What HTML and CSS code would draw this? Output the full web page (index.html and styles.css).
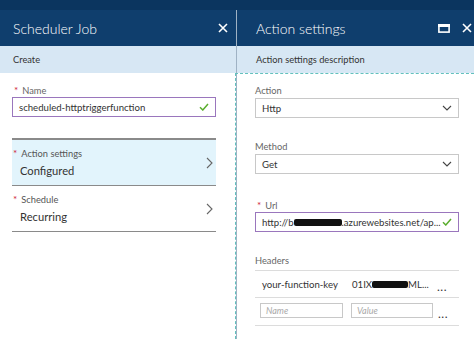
FILE: index.html
```html
<!DOCTYPE html>
<html>
<head>
<meta charset="utf-8">
<link rel="stylesheet" href="styles.css">
</head>
<body>
<div class="topbar"></div>
<div class="blades">
  <section class="blade blade-left">
    <header class="bh">
      <h1 class="bh-title">Scheduler Job</h1>
      <div class="bh-icons">
        <svg class="ico" width="10" height="10" viewBox="0 0 10 10"><path d="M1 1L9 9M9 1L1 9" stroke="#fff" stroke-width="1.6" fill="none"/></svg>
      </div>
    </header>
    <div class="sub">Create</div>
    <div class="content content-left">
      <div class="lbl"><span class="req">*</span>Name</div>
      <div class="input valid">
        <span class="itext">scheduled-httptriggerfunction</span>
        <svg class="check" width="10" height="8" viewBox="0 0 10 8"><path d="M1 4.2L3.8 7L9 1" stroke="#5aae2e" stroke-width="1.5" fill="none"/></svg>
      </div>
      <div class="rows">
        <div class="row active">
          <div class="row-text">
            <div class="rlbl"><span class="req">*</span>Action settings</div>
            <div class="rval">Configured</div>
          </div>
          <svg class="chev" width="7" height="12" viewBox="0 0 7 12"><path d="M1 1L6 6L1 11" stroke="#666" stroke-width="1.1" fill="none"/></svg>
        </div>
        <div class="row">
          <div class="row-text">
            <div class="rlbl"><span class="req">*</span>Schedule</div>
            <div class="rval">Recurring</div>
          </div>
          <svg class="chev" width="7" height="12" viewBox="0 0 7 12"><path d="M1 1L6 6L1 11" stroke="#666" stroke-width="1.1" fill="none"/></svg>
        </div>
      </div>
    </div>
  </section>
  <section class="blade blade-right">
    <header class="bh">
      <h1 class="bh-title">Action settings</h1>
      <div class="bh-icons">
        <svg class="ico" width="12" height="9" viewBox="0 0 12 9"><rect x="0.9" y="0.9" width="10.2" height="7.2" stroke="#fff" stroke-width="1.6" fill="none"/><rect x="0" y="0" width="12" height="3" fill="#fff"/></svg>
        <svg class="ico" width="10" height="10" viewBox="0 0 10 10"><path d="M1 1L9 9M9 1L1 9" stroke="#fff" stroke-width="1.6" fill="none"/></svg>
      </div>
    </header>
    <div class="sub">Action settings description</div>
    <div class="content content-right">
      <div class="field">
        <div class="lbl">Action</div>
        <div class="select"><span class="itext">Http</span><svg class="dd" width="10" height="6" viewBox="0 0 10 6"><path d="M1 1L5 5L9 1" stroke="#444" stroke-width="1.1" fill="none"/></svg></div>
      </div>
      <div class="field">
        <div class="lbl">Method</div>
        <div class="select"><span class="itext">Get</span><svg class="dd" width="10" height="6" viewBox="0 0 10 6"><path d="M1 1L5 5L9 1" stroke="#444" stroke-width="1.1" fill="none"/></svg></div>
      </div>
      <div class="field">
        <div class="lbl"><span class="req">*</span>Url</div>
        <div class="input valid">
          <span class="itext">http://b<span class="redact r1"></span>.azurewebsites.net/ap...</span>
          <svg class="check" width="10" height="8" viewBox="0 0 10 8"><path d="M1 4.2L3.8 7L9 1" stroke="#5aae2e" stroke-width="1.5" fill="none"/></svg>
        </div>
      </div>
      <div class="headers">
        <div class="lbl hlbl">Headers</div>
        <div class="hrow">
          <span class="hname">your-function-key</span>
          <span class="hval">01IX<span class="redact r2"></span>ML...</span>
          <span class="more">...</span>
        </div>
        <div class="hrow hrow-input">
          <span class="hinput">Name</span>
          <span class="hinput">Value</span>
          <span class="more">...</span>
        </div>
      </div>
    </div>
  </section>
</div>
</body>
</html>
```

FILE: styles.css
```css
* { box-sizing: border-box; }
html, body { margin: 0; padding: 0; }
body {
  width: 474px;
  height: 339px;
  overflow: hidden;
  background: #fff;
  font-family: Lato, "Open Sans", sans-serif;
  color: #333;
}
.topbar { height: 10px; background: #0b355f; }
.blades { display: flex; height: 329px; }
.blade { display: flex; flex-direction: column; }
.blade-left { width: 237px; border-right: 1px solid #9fb2c4; }
.blade-right { width: 237px; }
.bh {
  height: 36px;
  background: #0f3e6d;
  display: flex;
  align-items: center;
  justify-content: space-between;
  padding: 0 8px 0 13px;
}
.blade-right .bh { padding-left: 19px; padding-right: 2px; }
.bh-title {
  margin: 0;
  font-size: 14px;
  font-weight: 300;
  color: #fff;
}
.bh-icons { display: flex; align-items: center; gap: 12px; }
.ico { display: block; }
.sub {
  height: 27px;
  background: #d7e7f4;
  font-size: 9.3px;
  color: #333;
  display: flex;
  align-items: center;
  padding-left: 13px;
}
.blade-right .sub { padding-left: 19px; }
.content { flex: 1; }
.content-left { padding: 10px 20px 0 12px; }
.content-right {
  padding: 10px 15px 0 19px;
  border-top: 1px dashed #63c1bd;
  border-left: 1px dashed #63c1bd;
  margin-left: -2px;
}
.lbl {
  font-size: 9.3px;
  color: #666;
  line-height: 14px;
  height: 14px;
}
.req { color: #d0263a; margin-left: 2px; margin-right: 4px; font-size: 10px; }
.input, .select {
  height: 20px;
  display: flex;
  align-items: center;
  justify-content: space-between;
  padding: 0 6px;
  font-size: 9.6px;
  color: #333;
  border: 1px solid #c8c8c8;
}
.input.valid { border-color: #9a76bd; }
.itext { white-space: nowrap; display: flex; align-items: center; }
.check, .chev, .dd { display: block; flex-shrink: 0; }
.rows { margin-top: 21px; }
.row {
  height: 47px;
  display: flex;
  align-items: center;
  justify-content: space-between;
  padding: 0 3px 0 8px;
  border-top: 2px solid #8a8a8a;
}
.row + .row { border-top: 1.5px solid #8a8a8a; border-bottom: 1.5px solid #8a8a8a; height: 47px; }
.row.active { background: #e2f4fc; }
.row-text { display: flex; flex-direction: column; gap: 3px; }
.rlbl { font-size: 9.3px; color: #555; line-height: 13px; }
.rlbl .req { margin-left: -7px; margin-right: 4px; }
.rval { font-size: 11.2px; color: #333; line-height: 16px; }
.field { margin-bottom: 22px; }
.content-right .field:nth-child(2) { margin-bottom: 24px; }
.redact { display: inline-block; background: #111; height: 7px; border-radius: 2px; }
.r1 { width: 48px; }
.r2 { width: 36px; }
.headers { margin-top: 8px; }
.hlbl { margin-bottom: 2px; }
.hrow {
  height: 27px;
  border-top: 1px solid #dcdcdc;
  display: flex;
  align-items: center;
  font-size: 9.6px;
  color: #333;
  white-space: nowrap;
}
.hrow-input { border-bottom: 1px solid #dcdcdc; height: 29px; padding: 0 0 3px 5px; gap: 8px; }
.hname { width: 97px; padding-left: 7px; }
.hval { width: 85px; display: flex; align-items: center; }
.hinput {
  width: 83px;
  height: 15px;
  border: 1px solid #c8c8c8;
  font-size: 9px;
  font-style: italic;
  color: #aaa;
  padding-left: 5px;
  display: flex;
  align-items: center;
}
.hrow-input .hinput + .hinput { width: 82px; }
.hrow-input .more { margin-left: -3px; margin-top: 7px; }
.more { font-size: 12px; color: #333; letter-spacing: 0.5px; margin-top: 4px; }
```
